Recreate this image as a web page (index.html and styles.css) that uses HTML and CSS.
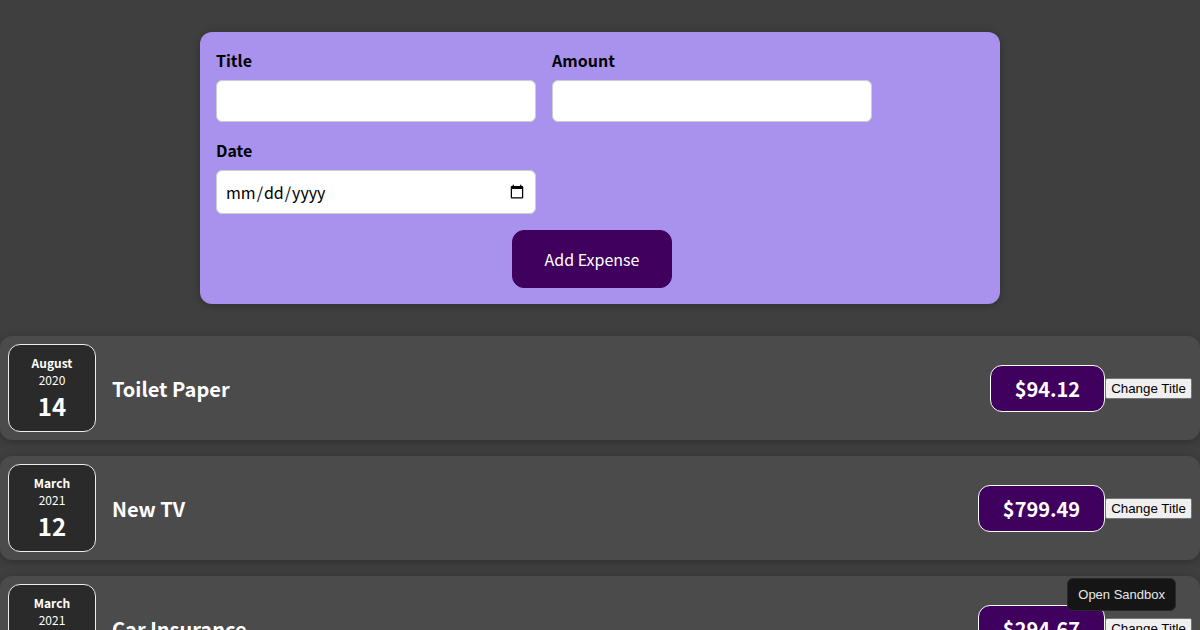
FILE: index.html
```html
<!DOCTYPE html>
<html lang="en">

<head>
    <meta charset="UTF-8">
    <meta name="viewport" content="width=device-width, initial-scale=1.0">
    <title>Expense Tracker</title>
    <link rel="stylesheet" href="styles.css">
</head>

<body>
    <div class="new-expense">
        <form>
            <div class="new-expense__controls">
                <div class="new-expense__control">
                    <label>Title</label>
                    <input type="text">
                </div>
                <div class="new-expense__control">
                    <label>Amount</label>
                    <input type="number" min="0.01" step="0.01">
                </div>
                <div class="new-expense__control">
                    <label>Date</label>
                    <input type="date" min="2019-01-01" max="2022-12-31">
                </div>
            </div>
            <div class="new-expense__actions">
                <button type="submit">Add Expense</button>
            </div>
        </form>
    </div>

    <div class="expenses">
        <div class="expense-item">
            <div class="expense-date">
                <div class="expense-date__month">August</div>
                <div class="expense-date__year">2020</div>
                <div class="expense-date__day">14</div>
            </div>
            <div class="expense-item__description">
                <h2>Toilet Paper</h2>
                <div class="expense-item__price">$94.12</div>
            </div>
            <button class="change-btn">Change Title</button>
        </div>
        <div class="expense-item">
            <div class="expense-date">
                <div class="expense-date__month">March</div>
                <div class="expense-date__year">2021</div>
                <div class="expense-date__day">12</div>
            </div>
            <div class="expense-item__description">
                <h2>New TV</h2>
                <div class="expense-item__price">$799.49</div>
            </div>
            <button class="change-btn">Change Title</button>
        </div>
        <div class="expense-item">
            <div class="expense-date">
                <div class="expense-date__month">March</div>
                <div class="expense-date__year">2021</div>
                <div class="expense-date__day">28</div>
            </div>
            <div class="expense-item__description">
                <h2>Car Insurance</h2>
                <div class="expense-item__price">$294.67</div>
            </div>
            <button class="change-btn">Change Title</button>
        </div>
        <div class="expense-item">
            <div class="expense-date">
                <div class="expense-date__month">June</div>
                <div class="expense-date__year">2021</div>
                <div class="expense-date__day">12</div>
            </div>
            <div class="expense-item__description">
                <h2>New Desk (Wooden)</h2>
                <div class="expense-item__price">$450</div>
            </div>
            <button class="change-btn">Change Title</button>
        </div>
    </div>

    <a class="sandbox-link" href="#">Open Sandbox</a>
</body>

</html>
```

FILE: styles.css
```css
* {
    box-sizing: border-box;
}

html {
    font-family: "Noto Sans CJK JP", "Noto Sans", sans-serif;
}

body {
    margin: 0;
    background-color: #3f3f3f;
}

.new-expense {
    background-color: #a892ee;
    padding: 1rem;
    margin: 2rem auto;
    width: 50rem;
    max-width: 95%;
    border-radius: 12px;
    text-align: center;
    box-shadow: 0 1px 8px rgba(0, 0, 0, 0.25);
}

.new-expense button {
    font: inherit;
    cursor: pointer;
    padding: 1rem 2rem;
    border: 1px solid #40005d;
    background-color: #40005d;
    color: white;
    border-radius: 12px;
    margin-right: 1rem;
}

.new-expense__controls {
    display: flex;
    flex-wrap: wrap;
    gap: 1rem;
    margin-bottom: 1rem;
    text-align: left;
}

.new-expense__control label {
    font-weight: bold;
    margin-bottom: 0.5rem;
    display: block;
}

.new-expense__control input {
    font: inherit;
    padding: 0.5rem;
    border-radius: 6px;
    border: 1px solid #ccc;
    width: 20rem;
    max-width: 100%;
}

.new-expense__actions {
    text-align: center;
}

.expense-item {
    display: flex;
    justify-content: space-between;
    align-items: center;
    box-shadow: 0 2px 8px rgba(0, 0, 0, 0.25);
    padding: 0.5rem;
    margin: 1rem 0;
    border-radius: 12px;
    background-color: #4b4b4b;
}

.expense-item__description {
    display: flex;
    flex-direction: row;
    align-items: center;
    justify-content: flex-start;
    flex: 1;
}

.expense-item h2 {
    font-size: 1.25rem;
    flex: 1;
    margin: 0 1rem;
    color: white;
}

.expense-item__price {
    font-size: 1.25rem;
    font-weight: bold;
    color: white;
    background-color: #40005d;
    border: 1px solid white;
    padding: 0.5rem 1.5rem;
    border-radius: 12px;
}

.expense-date {
    display: flex;
    flex-direction: column;
    width: 5.5rem;
    height: 5.5rem;
    border: 1px solid #ececec;
    background-color: #2a2a2a;
    color: white;
    border-radius: 12px;
    align-items: center;
    justify-content: center;
}

.expense-date__month {
    font-size: 0.75rem;
    font-weight: bold;
}

.expense-date__year {
    font-size: 0.75rem;
}

.expense-date__day {
    font-size: 1.5rem;
    font-weight: bold;
}

.change-btn {
    font-family: "Liberation Sans", Arial, sans-serif;
    font-size: 13.333px;
    padding: 2px 5px;
    border: 1px solid #767676;
    border-radius: 2px;
    background-color: #efefef;
    color: #000;
}

.sandbox-link {
    position: fixed;
    right: 24px;
    bottom: 19px;
    background-color: #151515;
    color: #e8e8e8;
    font-family: "Liberation Sans", Arial, sans-serif;
    font-size: 13px;
    text-decoration: none;
    padding: 8px 10px;
    border: 1px solid #2a2a2a;
    border-radius: 6px;
}
```
